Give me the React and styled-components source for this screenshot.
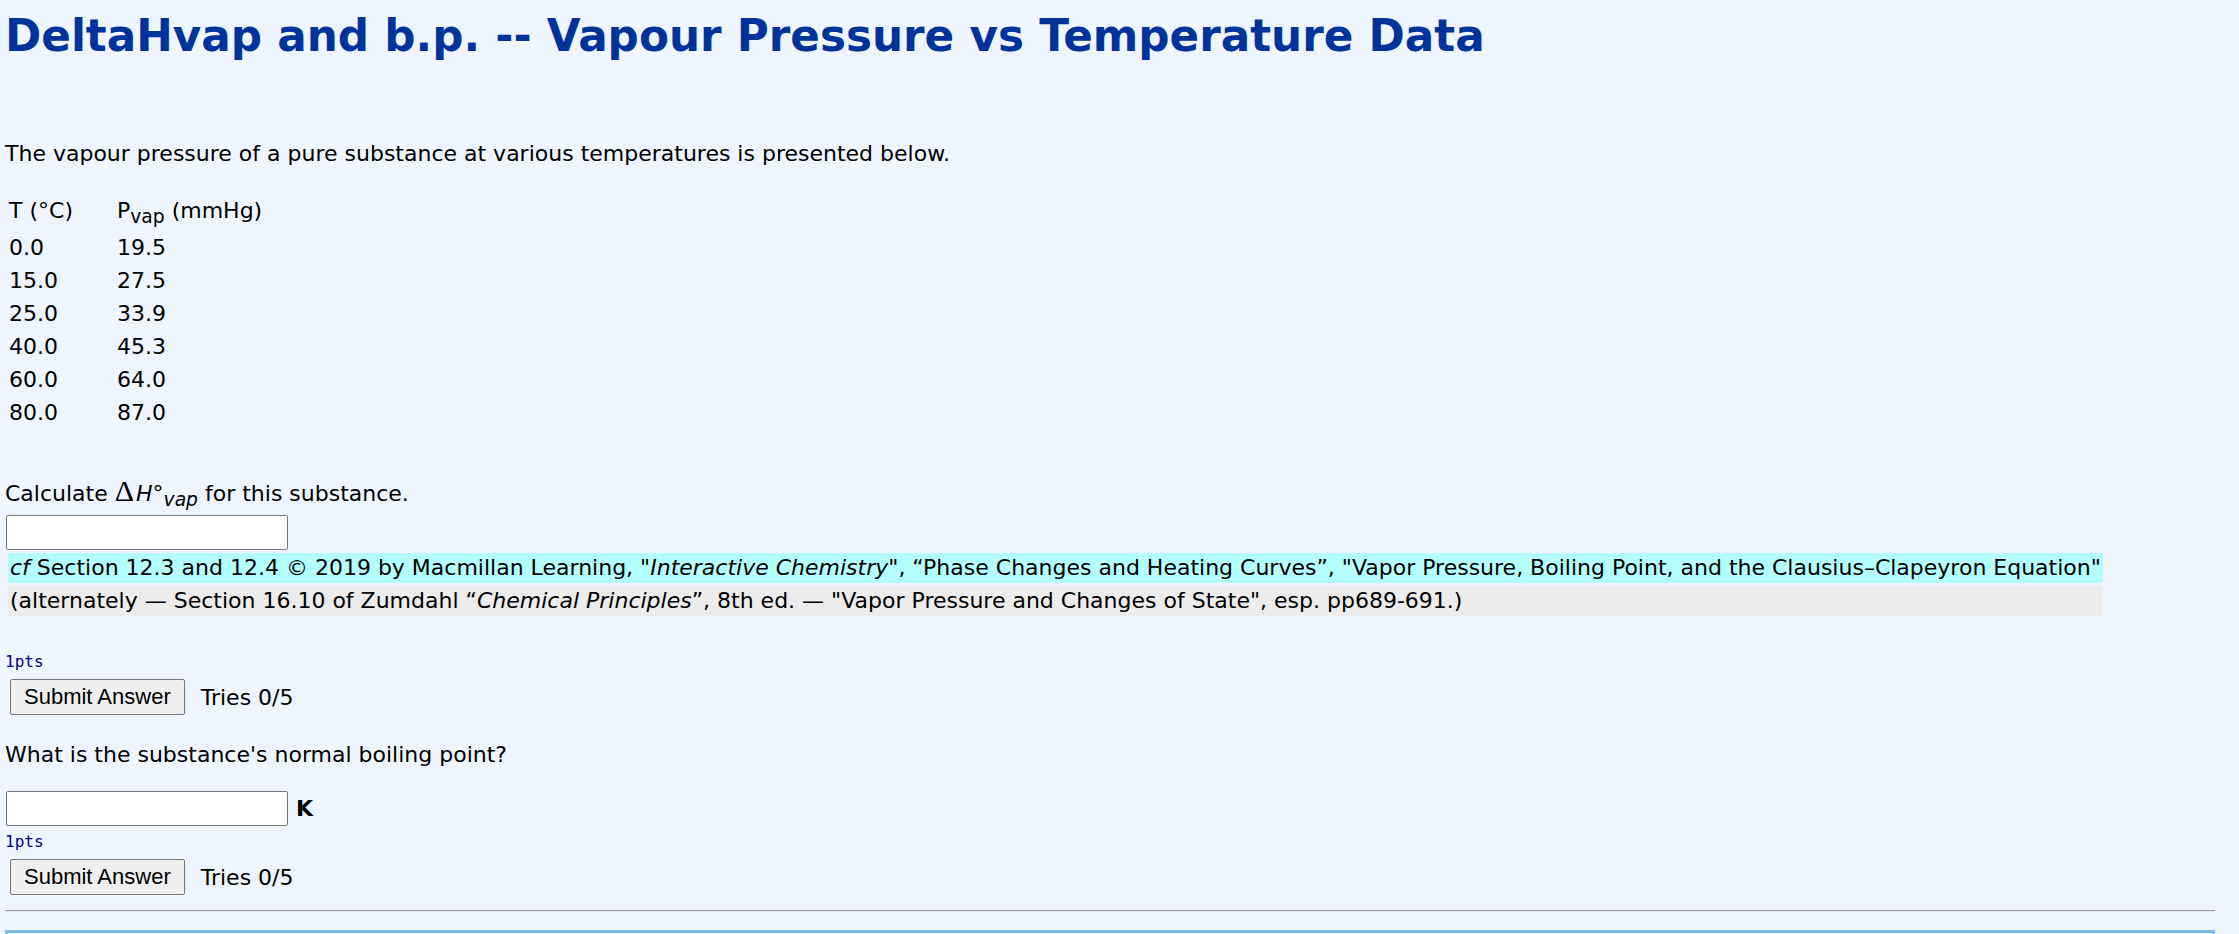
import React from "react";
import styled, { createGlobalStyle } from "styled-components";

const Global = createGlobalStyle`
  html, body {
    margin: 0;
    padding: 0;
    background: #eef5ff;
  }
  body {
    font-family: "DejaVu Sans", Verdana, sans-serif;
    font-size: 22px;
    color: #000;
  }
`;

const Page = styled.div`
  padding: 0 24px 4px 5px;
`;

const Title = styled.h1`
  margin: 9px 0 0 0;
  font-size: 43.7px;
  line-height: 54px;
  font-weight: bold;
  color: #003399;
`;

const Para = styled.p`
  margin: ${(p) => p.$top || 0}px 0 0 0;
  line-height: 26px;
`;

const DataTable = styled.table`
  margin-top: 27px;
  border-spacing: 2px;
  td {
    padding: 2px 2px 3px;
    line-height: 26px;
    vertical-align: top;
  }
  thead td {
    padding-bottom: 7px;
  }
  td:first-child {
    width: 102px;
  }
`;

const Delta = styled.span`
  font-family: "Liberation Serif", "Times New Roman", serif;
  font-size: 30px;
  line-height: 20px;
  margin-right: 2px;
`;

const Ital = styled.i`
  font-style: italic;
`;

const Sub = styled.sub`
  font-size: 0.85em;
  line-height: 0;
  vertical-align: -0.25em;
`;

const Answer = styled.input`
  display: block;
  box-sizing: border-box;
  width: 282px;
  height: 35px;
  margin: ${(p) => p.$top || 0}px 0 0 1px;
  border: 1px solid #767676;
  border-radius: 2px;
  background: #fff;
`;

const AnswerRow = styled.div`
  display: flex;
  align-items: center;
  gap: 8px;
  margin-top: 23px;
  font-weight: bold;
`;

const Citation = styled.table`
  margin-top: 0;
  border-spacing: 3px;
`;

const CiteCell = styled.td`
  padding: 0 2px;
  height: 30px;
  line-height: 30px;
  white-space: nowrap;
  background: ${(p) => p.$bg};
`;

const Points = styled.div`
  margin-top: ${(p) => p.$top || 0}px;
  font-family: "DejaVu Sans Mono", monospace;
  font-size: 16px;
  line-height: 20px;
  color: #000080;
`;

const SubmitRow = styled.div`
  display: flex;
  align-items: center;
  gap: 16px;
  margin-top: 7px;
  padding-left: 5px;
`;

const Button = styled.button`
  box-sizing: border-box;
  height: 36px;
  padding: 0 13px;
  font-family: "Liberation Sans", Arial, sans-serif;
  font-size: 22px;
  color: #000;
  background: #efefef;
  border: 1px solid #767676;
  border-radius: 2px;
`;

const Rule = styled.hr`
  margin: 15px 0 0 0;
  border: none;
  border-top: 1px solid #999;
  border-bottom: 1px solid #e4e8ee;
  height: 0;
`;

const NextBox = styled.div`
  margin-top: 18px;
  height: 20px;
  border: 3px solid #80b8f0;
  background: #e6efff;
`;

const rows = [
  ["0.0", "19.5"],
  ["15.0", "27.5"],
  ["25.0", "33.9"],
  ["40.0", "45.3"],
  ["60.0", "64.0"],
  ["80.0", "87.0"],
];

export default function App() {
  return (
    <Page>
      <Global />
      <Title>DeltaHvap and b.p. -- Vapour Pressure vs Temperature Data</Title>
      <Para $top={78}>
        The vapour pressure of a pure substance at various temperatures is presented below.
      </Para>
      <DataTable>
        <thead>
          <tr>
            <td>T (°C)</td>
            <td>
              P<Sub>vap</Sub> (mmHg)
            </td>
          </tr>
        </thead>
        <tbody>
          {rows.map(([t, p]) => (
            <tr key={t}>
              <td>{t}</td>
              <td>{p}</td>
            </tr>
          ))}
        </tbody>
      </DataTable>

      <Para $top={50}>
        Calculate <Delta>Δ</Delta>
        <Ital>H°</Ital>
        <Sub>
          <Ital>vap</Ital>
        </Sub>{" "}
        for this substance.
      </Para>
      <Answer $top={8} type="text" />
      <Citation>
        <tbody>
          <tr>
            <CiteCell $bg="#b3ffff">
              <Ital>cf</Ital> Section 12.3 and 12.4 © 2019 by Macmillan Learning, "
              <Ital>Interactive Chemistry</Ital>", “Phase Changes and Heating Curves”, "Vapor
              Pressure, Boiling Point, and the Clausius–Clapeyron Equation"
            </CiteCell>
          </tr>
          <tr>
            <CiteCell $bg="#ececec">
              (alternately — Section 16.10 of Zumdahl “<Ital>Chemical Principles</Ital>”, 8th ed.
              — "Vapor Pressure and Changes of State", esp. pp689-691.)
            </CiteCell>
          </tr>
        </tbody>
      </Citation>

      <Points $top={33}>1pts</Points>
      <SubmitRow>
        <Button>Submit Answer</Button>
        <span>Tries 0/5</span>
      </SubmitRow>

      <Para $top={27}>What is the substance's normal boiling point?</Para>
      <AnswerRow>
        <Answer type="text" />
        <span>K</span>
      </AnswerRow>
      <Points $top={6}>1pts</Points>
      <SubmitRow>
        <Button>Submit Answer</Button>
        <span>Tries 0/5</span>
      </SubmitRow>
      <Rule />
      <NextBox />
    </Page>
  );
}
